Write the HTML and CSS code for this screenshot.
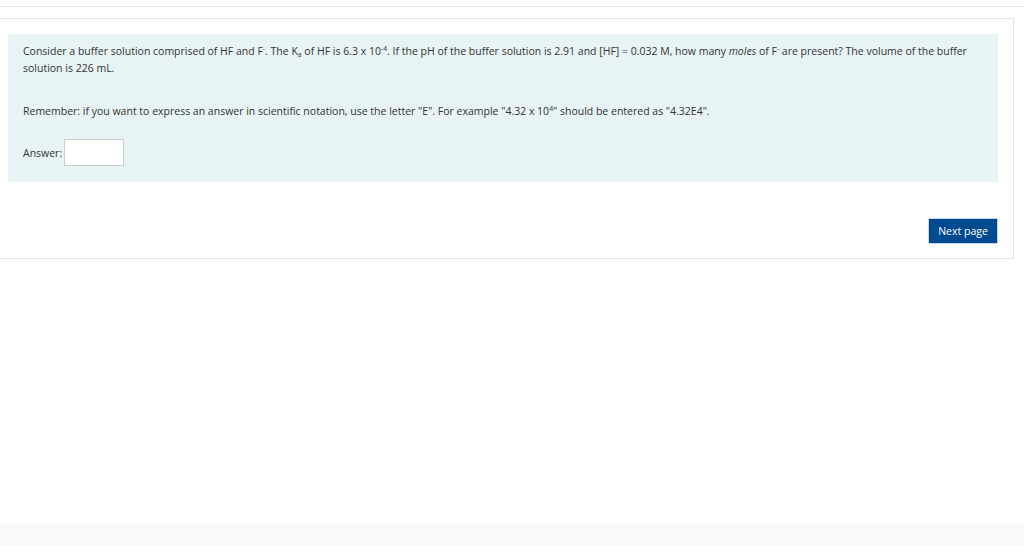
FILE: index.html
```html
<!DOCTYPE html>
<html lang="en">
<head>
    <meta charset="UTF-8">
    <title>Question</title>
    <link rel="stylesheet" href="styles.css">
</head>
<body>
    <div class="topbar"></div>
    <div class="page">
        <div class="card">
            <div class="question">
                <p class="q-text">Consider a buffer solution comprised of HF and F<sup>-</sup>. The K<sub>a</sub> of HF is 6.3 x 10<sup>-4</sup>. If the pH of the buffer solution is 2.91 and [HF] = 0.032 M, how many <em>moles</em> of F<sup>-</sup> are present? The volume of the buffer solution is 226 mL.</p>
                <p class="q-note">Remember: if you want to express an answer in scientific notation, use the letter "E". For example "4.32 x 10<sup>4</sup>" should be entered as "4.32E4".</p>
                <div class="answer">
                    <label for="answer">Answer:</label>
                    <input type="text" id="answer" class="answer-input">
                </div>
            </div>
            <div class="actions">
                <button class="next-btn">Next page</button>
            </div>
        </div>
    </div>
    <div class="footer"></div>
</body>
</html>
```
FILE: styles.css
```css
* {
    margin: 0;
    padding: 0;
    box-sizing: border-box;
}

body {
    font-family: "Open Sans", "Noto Sans", sans-serif;
    font-size: 10.5px;
    color: #333;
    background: #fff;
    height: 555px;
    display: flex;
    flex-direction: column;
}

.topbar {
    height: 7px;
    border-bottom: 1px solid #e6e6e6;
}

.page {
    flex: 1;
    padding-top: 11px;
}

.card {
    width: 1014px;
    border: 1px solid #e3e3e3;
    border-left: none;
    padding: 15px 15px 14px 8px;
}

.question {
    background: #e7f3f5;
    padding: 9px 15px 16px 15px;
    width: 990px;
}

.q-text {
    line-height: 17px;
}

.q-note {
    margin-top: 26px;
    line-height: 17px;
}

sup, sub {
    font-size: 65%;
    line-height: 0;
}

sup {
    vertical-align: 4px;
}

sub {
    vertical-align: -2px;
}

.answer {
    margin-top: 19px;
    display: flex;
    align-items: center;
    gap: 2px;
}

.answer-input {
    width: 60px;
    height: 27px;
    border: 1px solid #ccc;
    background: #fff;
}

.actions {
    display: flex;
    justify-content: flex-end;
    margin-top: 36px;
}

.next-btn {
    font-family: inherit;
    font-size: 10.5px;
    background: #004a8f;
    color: #fff;
    border: 1px solid #c5d6ea;
    height: 26px;
    width: 70px;
    cursor: pointer;
    display: block;
}

.footer {
    height: 23px;
    background: #f8f9fa;
    margin-bottom: 9px;
}
```
